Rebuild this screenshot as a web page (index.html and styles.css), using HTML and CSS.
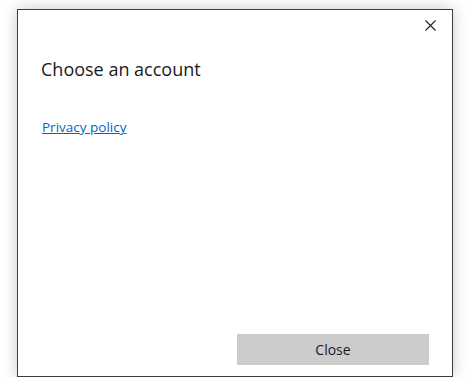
FILE: index.html
```html
<!DOCTYPE html>
<html>
<head>
<meta charset="utf-8">
<link rel="stylesheet" href="styles.css">
</head>
<body>
<div class="dialog">
  <div class="titlebar">
    <button class="x-btn" aria-label="Close">
      <svg width="11" height="11" viewBox="0 0 11 11"><path d="M0.5 0.5 L10.5 10.5 M10.5 0.5 L0.5 10.5" stroke="#222" stroke-width="1.1" fill="none"/></svg>
    </button>
  </div>
  <div class="content">
    <h1 class="heading">Choose an account</h1>
    <a class="link" href="#">Privacy policy</a>
  </div>
  <div class="footer">
    <button class="close-btn">Close</button>
  </div>
</div>
</body>
</html>
```
FILE: styles.css
```css
html, body {
  margin: 0;
  padding: 0;
  background: #ffffff;
}
body {
  padding: 9px 0 0 17px;
  font-family: "Open Sans", "Noto Sans", sans-serif;
}
.dialog {
  box-sizing: border-box;
  width: 436px;
  height: 368px;
  border: 1px solid #3c3c3c;
  background: #fff;
  box-shadow: 0 0 14px rgba(0, 0, 0, 0.22);
  display: flex;
  flex-direction: column;
  padding: 0 23px 11px 23px;
}
.titlebar {
  display: flex;
  justify-content: flex-end;
  height: 30px;
  margin-right: -16px;
}
.x-btn {
  border: 0;
  background: transparent;
  width: 30px;
  height: 30px;
  padding: 0;
  display: flex;
  align-items: center;
  justify-content: center;
}
.content {
  display: flex;
  flex-direction: column;
  align-items: flex-start;
}
.heading {
  margin: 17px 0 0 0;
  font-weight: 400;
  font-size: 18px;
  line-height: 24px;
  color: #1a1a1a;
}
.link {
  margin: 36px 0 0 1px;
  font-size: 13.5px;
  line-height: 20px;
  color: #0067c0;
  text-decoration: underline;
}
.footer {
  margin-top: auto;
  display: flex;
  justify-content: flex-end;
}
.close-btn {
  width: 192px;
  height: 31px;
  border: 0;
  background: #cccccc;
  color: #1a1a1a;
  font-family: "Open Sans", "Noto Sans", sans-serif;
  font-size: 14px;
  padding: 0;
}
```
